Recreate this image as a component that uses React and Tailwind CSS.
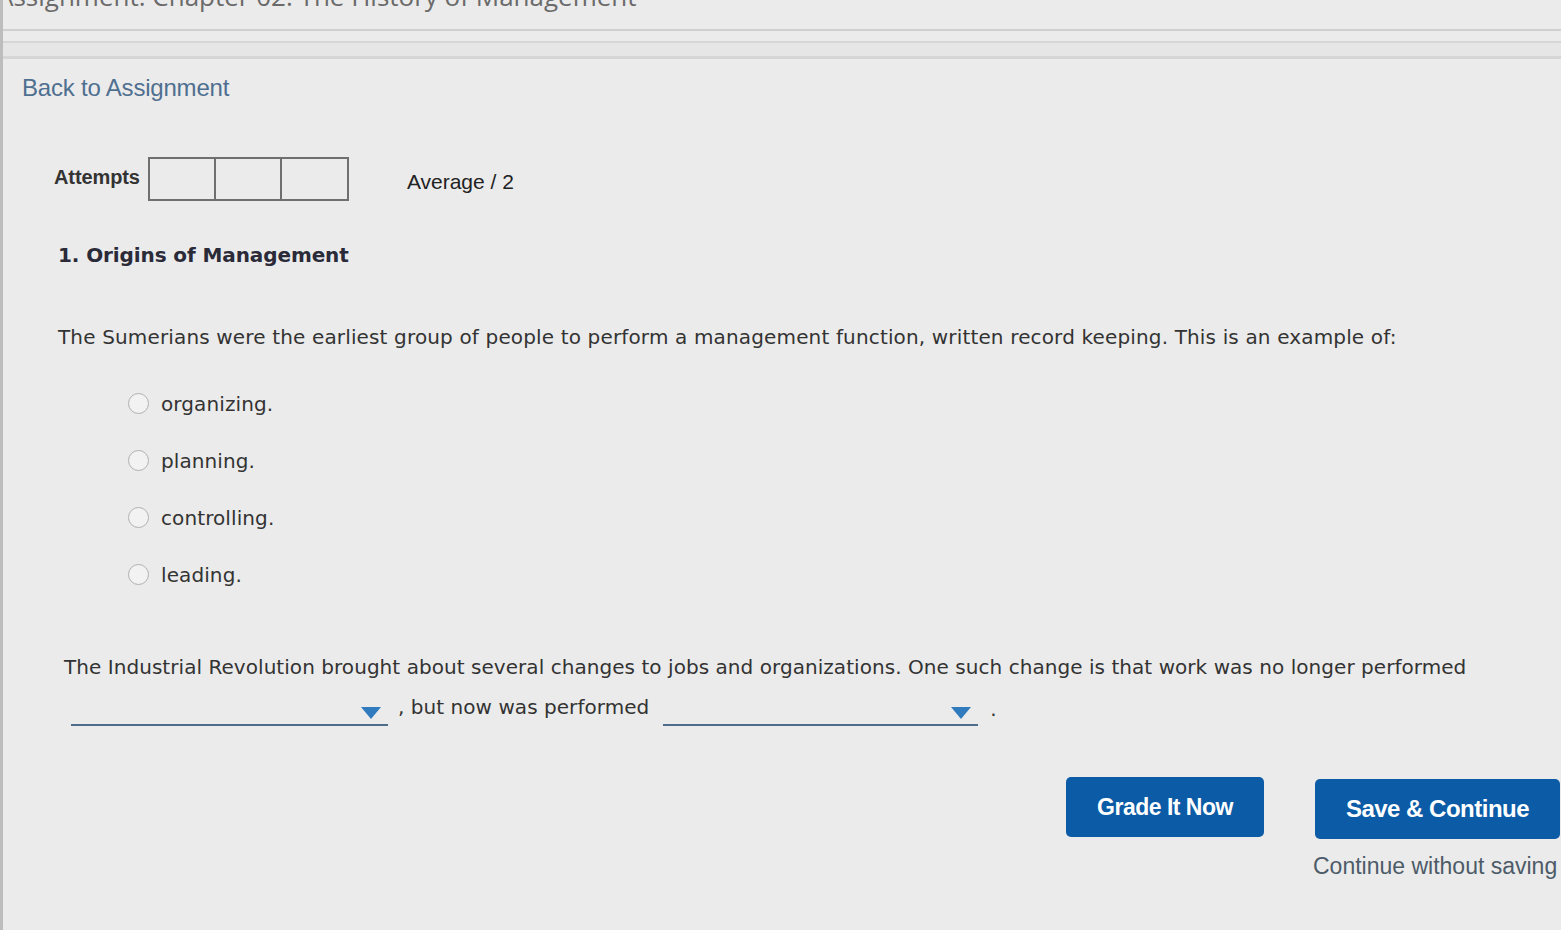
import React from "react";

const Radio = ({ label }) => (
  <div className="flex items-center h-[57px]">
    <span className="w-[21px] h-[21px] rounded-full border-[1.5px] border-[#b0b0b0] bg-[#f2f2f2] shrink-0" />
    <span className="ml-[12px] text-[20px] text-[#333] tracking-[0.1px]">{label}</span>
  </div>
);

const Caret = () => (
  <svg width="22" height="14" viewBox="0 0 22 14">
    <path d="M1 1 L21 1 L11 13 Z" fill="#2f7bbd" />
  </svg>
);

const Dropdown = ({ w }) => (
  <div className={`flex items-end justify-end border-b-[2px] border-[#4d6d8a] h-[30px] pr-[6px] pb-[4px] ${w}`}>
    <Caret />
  </div>
);

export default function App() {
  return (
    <div
      className="w-[1561px] h-[930px] overflow-hidden bg-[#ebebeb] border-l-[3px] border-[#bdbdbd] text-[#333]"
      style={{ fontFamily: "'DejaVu Sans', Verdana, sans-serif" }}
    >
      {/* header */}
      <div className="h-[31px] border-b-[2px] border-[#cfcfcf] overflow-hidden">
        <div
          className="-mt-[19px] ml-[-6px] text-[26px] leading-[30px] text-[#6a6a6a] whitespace-nowrap"
          style={{ fontFamily: "'Open Sans', sans-serif" }}
        >
          Assignment: Chapter 02: The History of Management
        </div>
      </div>
      <div className="mt-[10px] h-[18px] border-t-[2px] border-b-[3px] border-[#d6d6d6] bg-[#e6e6e6]" />

      <div className="pl-[19px]" style={{ fontFamily: "'Liberation Sans', Arial, sans-serif" }}>
        <div className="mt-[12px] text-[24px] leading-[34px] text-[#4f6f90] tracking-[-0.2px]">Back to Assignment</div>

        <div className="mt-[52px] flex items-center">
          <span className="ml-[32px] -mt-[4px] text-[20px] font-bold text-[#333] tracking-[-0.1px]">Attempts</span>
          <div className="ml-[8px] flex border-[2px] border-[#6f6f6f] h-[44px]">
            <div className="w-[66px] border-r-[2px] border-[#6f6f6f]" />
            <div className="w-[66px] border-r-[2px] border-[#6f6f6f]" />
            <div className="w-[65px]" />
          </div>
          <span className="ml-[58px] mt-[6px] text-[21px] text-[#222]">Average / 2</span>
        </div>
      </div>

      <div className="pl-[55px]">
        <div className="mt-[39px] text-[20px] font-bold text-[#2a2a38] tracking-[-0.1px]">1. Origins of Management</div>

        <div className="mt-[52px] text-[20px] text-[#333] tracking-[0.15px] whitespace-nowrap">
          The Sumerians were the earliest group of people to perform a management function, written record keeping. This is an example of:
        </div>

        <div className="mt-[23px] ml-[70px] flex flex-col">
          <Radio label="organizing." />
          <Radio label="planning." />
          <Radio label="controlling." />
          <Radio label="leading." />
        </div>

        <div className="mt-[49px] ml-[6px] text-[20px] text-[#333] tracking-[0.05px] whitespace-nowrap">
          The Industrial Revolution brought about several changes to jobs and organizations. One such change is that work was no longer performed
        </div>
        <div className="ml-[13px] mt-[10px] flex items-end text-[20px] text-[#333] tracking-[0.05px]">
          <Dropdown w="w-[317px]" />
          <span className="ml-[10px] mb-[4px]">, but now was performed</span>
          <Dropdown w="w-[315px] ml-[14px]" />
          <span className="ml-[12px] mb-[2px]">.</span>
        </div>
      </div>

      <div className="mt-[51px] flex justify-end pr-[3px]" style={{ fontFamily: "'Liberation Sans', Arial, sans-serif" }}>
        <button className="w-[198px] h-[60px] rounded-[5px] bg-[#0b5ba6] text-white text-[23px] font-bold tracking-[-0.5px]">
          Grade It Now
        </button>
        <div className="ml-[51px] flex flex-col">
          <button className="mt-[2px] w-[245px] h-[60px] rounded-[5px] bg-[#0b5ba6] text-white text-[24px] font-bold tracking-[-0.5px] -mr-[2px]">
            Save &amp; Continue
          </button>
          <span className="mt-[10px] -ml-[2px] text-[23px] text-[#4d5b69] whitespace-nowrap">Continue without saving</span>
        </div>
      </div>
    </div>
  );
}
